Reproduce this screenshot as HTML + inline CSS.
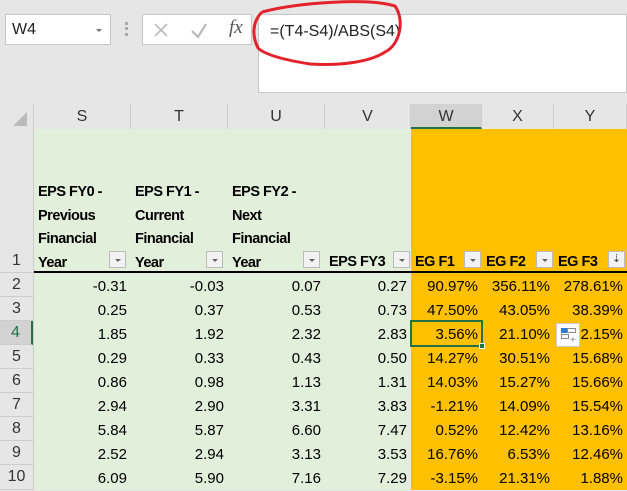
<!DOCTYPE html>
<html><head><style>
*{margin:0;padding:0;box-sizing:border-box}
body{width:627px;height:490px;overflow:hidden;background:#e6e6e6;font-family:"Liberation Sans",Arial,sans-serif;position:relative}
.a{position:absolute}
.c{position:absolute;font-size:15px;color:#000;text-align:right;line-height:24px}
.h{position:absolute;font-size:14.5px;font-weight:bold;line-height:23.5px;color:#000;letter-spacing:-0.5px;white-space:nowrap}
.rh{position:absolute;left:0;width:33px;text-align:center;font-size:16px;color:#333;border-bottom:1px solid #ccc;background:#e6e6e6}
.ch{position:absolute;top:104px;height:25px;text-align:center;font-size:16px;color:#333;line-height:25px;border-right:1px solid #ccc;background:#e6e6e6}
.dd{position:absolute;width:17px;height:17px;background:#f2f2f2;border:1px solid #bbb}
.dd:after{content:"";position:absolute;left:5px;top:7px;border-left:3px solid transparent;border-right:3px solid transparent;border-top:3px solid #666}
</style></head><body>
<div class="a" style="left:5px;top:14px;width:106px;height:31px;background:#fff;border:1px solid #c6c6c6;font-size:16px;line-height:29px;padding-left:6px;color:#222">W4</div>
<div class="a" style="left:96px;top:29px;border-left:3px solid transparent;border-right:3px solid transparent;border-top:3px solid #777"></div>
<div class="a" style="left:125px;top:22px;width:3px;height:14px;border-left:3px dotted #aaa"></div>
<div class="a" style="left:142px;top:14px;width:110px;height:31px;background:#fff;border:1px solid #c6c6c6"></div>
<svg class="a" style="left:142px;top:14px" width="110" height="31"><path d="M13 10 L25 22 M25 10 L13 22" stroke="#bbb" stroke-width="1.6" fill="none"/><path d="M50 17 L56 23 L64 10" stroke="#bbb" stroke-width="2.2" fill="none"/></svg>
<div class="a" style="left:229px;top:17px;font-size:19px;font-style:italic;font-family:'Liberation Serif',serif;color:#555">fx</div>
<div class="a" style="left:258px;top:14px;width:369px;height:79px;background:#fff;border:1px solid #c6c6c6"></div>
<div class="a" style="left:270px;top:23px;font-size:16px;color:#222">=(T4-S4)/ABS(S4)</div>
<svg class="a" style="left:0;top:0" width="627" height="100"><path d="M262 12 C300 2 370 -2 395 6 C405 20 400 45 385 52 C370 62 340 66 310 64 C285 60 265 55 258 48 C252 36 252 22 262 12" fill="none" stroke="#e4222b" stroke-width="3"/></svg>
<div class="a" style="left:0;top:104px;width:34px;height:25px;background:#e6e6e6;border-right:1px solid #ccc"></div>
<div class="a" style="left:13px;top:112px;border-left:14px solid transparent;border-bottom:14px solid #bbb"></div>
<div class="ch" style="left:34px;width:97px">S</div>
<div class="ch" style="left:131px;width:97px">T</div>
<div class="ch" style="left:228px;width:97px">U</div>
<div class="ch" style="left:325px;width:86px">V</div>
<div class="ch" style="left:411px;width:71px;background:#d2d2d2;border-bottom:2px solid #217346">W</div>
<div class="ch" style="left:482px;width:72px">X</div>
<div class="ch" style="left:554px;width:73px">Y</div>
<div class="a" style="left:34px;top:129px;width:377px;height:361px;background:#e2efda"></div>
<div class="a" style="left:411px;top:129px;width:216px;height:361px;background:#ffc000"></div>
<div class="a" style="left:34px;top:271px;width:593px;height:2px;background:#000"></div>
<div class="rh" style="top:129px;height:144px;line-height:24px;padding-top:120px">1</div>
<div class="rh" style="top:273px;height:24px;line-height:24px">2</div>
<div class="rh" style="top:297px;height:24px;line-height:24px">3</div>
<div class="rh" style="top:321px;height:24px;line-height:24px;background:#d2d2d2;color:#217346;border-right:2px solid #217346">4</div>
<div class="rh" style="top:345px;height:24px;line-height:24px">5</div>
<div class="rh" style="top:369px;height:24px;line-height:24px">6</div>
<div class="rh" style="top:393px;height:24px;line-height:24px">7</div>
<div class="rh" style="top:417px;height:24px;line-height:24px">8</div>
<div class="rh" style="top:441px;height:24px;line-height:24px">9</div>
<div class="rh" style="top:465px;height:25px;line-height:24px">10</div>
<div class="a" style="left:33px;top:104px;width:1px;height:386px;background:#ccc"></div>
<div class="h" style="left:38px;top:181px">EPS FY0 -<br>Previous<br>Financial<br>Year</div>
<div class="h" style="left:135px;top:181px">EPS FY1 -<br>Current<br>Financial<br>Year</div>
<div class="h" style="left:232px;top:181px">EPS FY2 -<br>Next<br>Financial<br>Year</div>
<div class="h" style="left:329px;top:251px">EPS FY3</div>
<div class="h" style="left:415px;top:251px">EG F1</div>
<div class="h" style="left:486px;top:251px">EG F2</div>
<div class="h" style="left:558px;top:251px">EG F3</div>
<div class="dd" style="left:109px;top:251px"></div>
<div class="dd" style="left:206px;top:251px"></div>
<div class="dd" style="left:303px;top:251px"></div>
<div class="dd" style="left:393px;top:251px"></div>
<div class="dd" style="left:464px;top:251px"></div>
<div class="dd" style="left:536px;top:251px"></div>
<div class="a" style="left:608px;top:251px;width:17px;height:17px;background:#f2f2f2;border:1px solid #bbb;font-size:11px;line-height:15px;text-align:center;color:#444">⇣</div>
<div class="c" style="left:34px;top:275px;width:93px">-0.31<br>0.25<br>1.85<br>0.29<br>0.86<br>2.94<br>5.84<br>2.52<br>6.09</div>
<div class="c" style="left:131px;top:275px;width:93px">-0.03<br>0.37<br>1.92<br>0.33<br>0.98<br>2.90<br>5.87<br>2.94<br>5.90</div>
<div class="c" style="left:228px;top:275px;width:93px">0.07<br>0.53<br>2.32<br>0.43<br>1.13<br>3.31<br>6.60<br>3.13<br>7.16</div>
<div class="c" style="left:325px;top:275px;width:82px">0.27<br>0.73<br>2.83<br>0.50<br>1.31<br>3.83<br>7.47<br>3.53<br>7.29</div>
<div class="c" style="left:411px;top:275px;width:67px">90.97%<br>47.50%<br>3.56%<br>14.27%<br>14.03%<br>-1.21%<br>0.52%<br>16.76%<br>-3.15%</div>
<div class="c" style="left:482px;top:275px;width:68px">356.11%<br>43.05%<br>21.10%<br>30.51%<br>15.27%<br>14.09%<br>12.42%<br>6.53%<br>21.31%</div>
<div class="c" style="left:554px;top:275px;width:69px">278.61%<br>38.39%<br>22.15%<br>15.68%<br>15.66%<br>15.54%<br>13.16%<br>12.46%<br>1.88%</div>
<div class="a" style="left:410px;top:320px;width:73px;height:27px;border:2px solid #217346"></div>
<div class="a" style="left:479px;top:343px;width:6px;height:6px;background:#217346;border:1px solid #fff"></div>
<div class="a" style="left:556px;top:323px;width:24px;height:24px;background:#fff;border:1px solid #ccc"></div>
<div class="a" style="left:561px;top:328px;width:6px;height:5px;background:#2b7cd3"></div>
<div class="a" style="left:567px;top:328px;width:9px;height:5px;border:1px solid #888"></div>
<div class="a" style="left:561px;top:334px;width:8px;height:5px;border:1px solid #888"></div>
<div class="a" style="left:570px;top:336px;font-size:10px;color:#888;line-height:10px">+</div>
</body></html>
